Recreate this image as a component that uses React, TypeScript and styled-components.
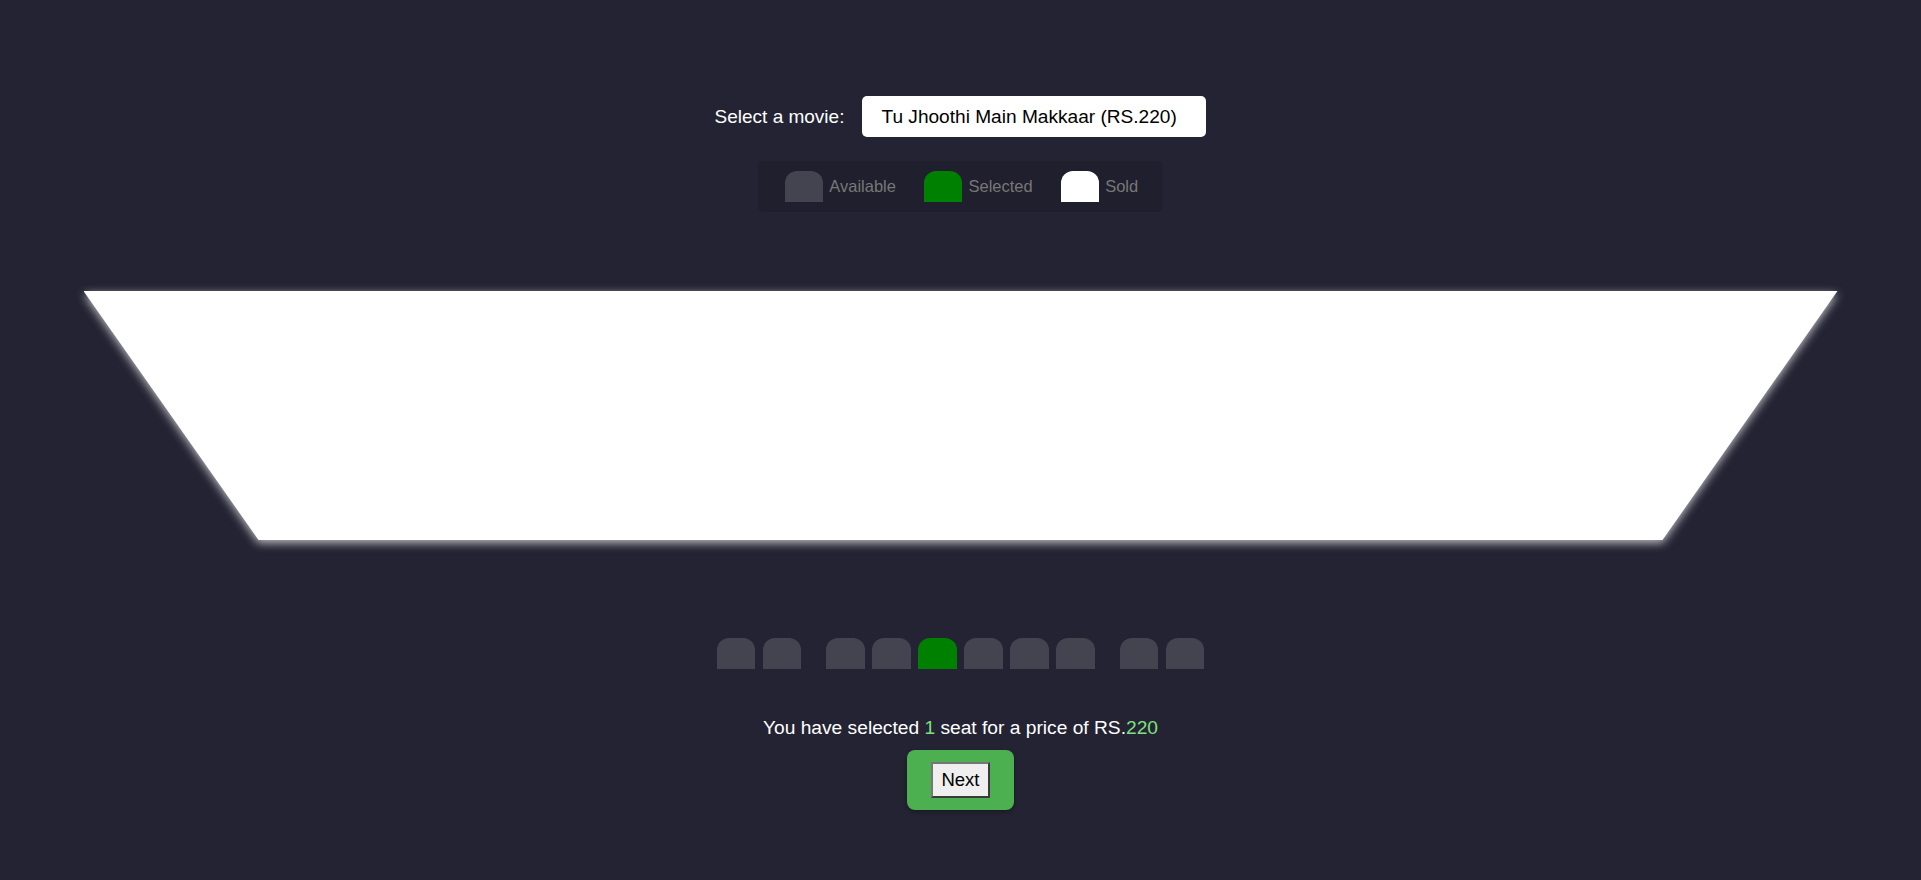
import { useState } from "react";
import styled, { createGlobalStyle } from "styled-components";

const GlobalStyle = createGlobalStyle`
  * {
    box-sizing: border-box;
  }

  body {
    margin: 0;
    background-color: #242333;
    font-family: "Liberation Sans", Arial, sans-serif;
    color: #fff;
  }
`;

const movies = [
  { title: "Tu Jhoothi Main Makkaar", price: 220 },
  { title: "Pathaan", price: 250 },
  { title: "Jawan", price: 200 },
];

// seat layout of the single row: 2 | 6 | 2
const seatRow = [false, false, false, false, true, false, false, false, false, false];

const App: React.FC = () => {
  const [movieIndex, setMovieIndex] = useState(0);
  const [selected, setSelected] = useState<boolean[]>(seatRow);

  const count = selected.filter(Boolean).length;
  const price = movies[movieIndex].price;

  const toggleSeat = (i: number) =>
    setSelected((prev) => prev.map((s, j) => (j === i ? !s : s)));

  return (
    <>
      <GlobalStyle />
      <Page>
        <MovieRow>
          <Label htmlFor="movie">Select a movie:</Label>
          <MovieSelect
            id="movie"
            value={movieIndex}
            onChange={(e) => setMovieIndex(Number(e.target.value))}
          >
            {movies.map((m, i) => (
              <option key={m.title} value={i}>
                {m.title} (RS.{m.price})
              </option>
            ))}
          </MovieSelect>
        </MovieRow>

        <Legend>
          <LegendItem>
            <LegendSeat $state="available" />
            <small>Available</small>
          </LegendItem>
          <LegendItem>
            <LegendSeat $state="selected" />
            <small>Selected</small>
          </LegendItem>
          <LegendItem>
            <LegendSeat $state="sold" />
            <small>Sold</small>
          </LegendItem>
        </Legend>

        <ScreenGlow>
          <Screen />
        </ScreenGlow>

        <SeatRow>
          {selected.map((s, i) => (
            <Seat
              key={i}
              $selected={s}
              $aisleRight={i === 1}
              $aisleLeft={i === selected.length - 2}
              onClick={() => toggleSeat(i)}
            />
          ))}
        </SeatRow>

        <Summary>
          You have selected <Count>{count}</Count> seat for a price of RS.
          <Count>{count * price}</Count>
        </Summary>

        <NextBox>
          <NextButton type="button">Next</NextButton>
        </NextBox>
      </Page>
    </>
  );
};

export default App;

const Page = styled.div`
  min-height: 880px;
  display: flex;
  flex-direction: column;
  align-items: center;
  padding-top: 96px;
`;

const MovieRow = styled.div`
  display: flex;
  align-items: center;
  height: 41px;
`;

const Label = styled.label`
  font-size: 19px;
  margin-right: 18px;
`;

const MovieSelect = styled.select`
  appearance: none;
  width: 344px;
  height: 41px;
  padding: 0 19px;
  border: none;
  border-radius: 5px;
  background: #fff;
  color: #000;
  font-family: "Liberation Sans", Arial, sans-serif;
  font-size: 19.1px;
  outline: none;
`;

const Legend = styled.ul`
  display: flex;
  gap: 28px;
  margin: 24px 0 0;
  padding: 10px 25px 10px 27px;
  list-style: none;
  background: rgba(0, 0, 0, 0.1);
  border-radius: 5px;
  color: #777;
`;

const LegendItem = styled.li`
  display: flex;
  align-items: center;

  small {
    margin-left: 6px;
    font-size: 16.5px;
  }
`;

const seatColors = {
  available: "#444451",
  selected: "#008000",
  sold: "#ffffff",
};

const LegendSeat = styled.span<{ $state: keyof typeof seatColors }>`
  width: 38.5px;
  height: 31px;
  border-radius: 12px 12px 0 0;
  background: ${({ $state }) => seatColors[$state]};
`;

const ScreenGlow = styled.div`
  width: 1754px;
  height: 249px;
  margin-top: 79px;
  filter: drop-shadow(0 3px 5px rgba(255, 255, 255, 0.7));
`;

const Screen = styled.div`
  width: 100%;
  height: 100%;
  background: #fff;
  clip-path: polygon(0 0, 100% 0, calc(100% - 175px) 100%, 175px 100%);
`;

const SeatRow = styled.div`
  display: flex;
  margin-top: 98px;
`;

const Seat = styled.div<{
  $selected: boolean;
  $aisleLeft: boolean;
  $aisleRight: boolean;
}>`
  width: 38.5px;
  height: 31px;
  margin-left: ${({ $aisleLeft }) => ($aisleLeft ? "21.25px" : "3.75px")};
  margin-right: ${({ $aisleRight }) => ($aisleRight ? "21.25px" : "3.75px")};
  border-radius: 12px 12px 0 0;
  background: ${({ $selected }) => ($selected ? "#008000" : "#444451")};
  cursor: pointer;
`;

const Summary = styled.p`
  margin: 48px 0 0;
  font-size: 19.2px;
`;

const Count = styled.span`
  color: #7fe07f;
`;

const NextBox = styled.div`
  margin-top: 11px;
  padding: 12px 24px;
  background: #4caf50;
  border-radius: 8px;
  box-shadow: 0 2px 4px rgba(0, 0, 0, 0.3);
`;

const NextButton = styled.button`
  padding: 5px 8px;
  background: #efefef;
  border: 2px solid;
  border-color: #767676 #3b3b3b #3b3b3b #767676;
  color: #000;
  font-family: "Liberation Sans", Arial, sans-serif;
  font-size: 18.5px;
  cursor: pointer;
`;
